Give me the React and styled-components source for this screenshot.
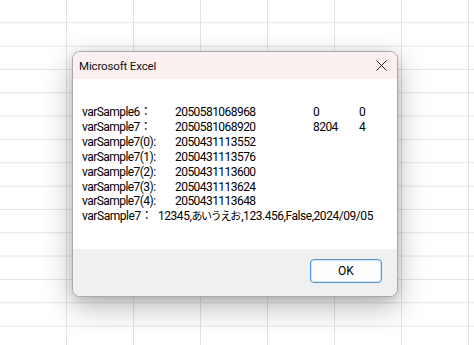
import React from "react";
import styled, { createGlobalStyle } from "styled-components";

const GlobalStyle = createGlobalStyle`
  html, body {
    margin: 0;
    padding: 0;
  }
  body {
    width: 474px;
    height: 345px;
    overflow: hidden;
    background-color: #ffffff;
    background-image:
      linear-gradient(to right, #e3e3e3 1px, transparent 1px),
      linear-gradient(to bottom, #e3e3e3 1px, transparent 1px);
    background-size: 67px 23.33px;
    background-position: -1px -1px;
    font-family: "Roboto", "Noto Sans CJK JP", sans-serif;
    color: #111111;
  }
`;

const Dialog = styled.div`
  margin: 51px 0 0 72px;
  width: 324px;
  height: 244px;
  display: flex;
  flex-direction: column;
  border: 1px solid #a9a9a9;
  border-radius: 8px;
  overflow: hidden;
  background: #ffffff;
  box-shadow: 0 10px 30px rgba(0, 0, 0, 0.28), 0 2px 8px rgba(0, 0, 0, 0.12);
`;

const TitleBar = styled.div`
  height: 27px;
  display: flex;
  align-items: center;
  justify-content: space-between;
  padding: 0 10px 0 6px;
  background: #faf0f0;
  font-size: 11.5px;
  letter-spacing: -0.15px;
`;

const CloseButton = styled.div`
  width: 12px;
  height: 12px;
  display: flex;
  align-items: center;
  justify-content: center;
  svg {
    display: block;
  }
`;

const Body = styled.div`
  flex: 1;
  padding: 26px 0 0 9px;
`;

const Table = styled.div`
  display: grid;
  grid-template-columns: 93px 138px 46px auto;
  font-size: 12px;
  letter-spacing: -0.55px;
  line-height: 14.9px;
  color: #000;
`;

const Cell = styled.div`
  white-space: nowrap;
  grid-column: ${(p) => (p.$full ? "1 / -1" : "auto")};
  letter-spacing: ${(p) => (p.$full ? "-0.45px" : "inherit")};
`;

const Kana = styled.span`
  font-size: 11px;
  letter-spacing: -1.3px;
  margin-right: 1.3px;
`;

const Footer = styled.div`
  height: 47px;
  display: flex;
  align-items: flex-start;
  justify-content: flex-end;
  padding: 10px 15px 0 0;
  box-sizing: border-box;
  background: #f0f0f0;
`;

const OkButton = styled.div`
  width: 70px;
  height: 22px;
  display: flex;
  align-items: center;
  justify-content: center;
  background: #fdfdfd;
  border: 1px solid #4f93cf;
  border-radius: 4px;
  box-shadow: inset 0 0 0 1px #d6e8f7;
  font-size: 12px;
  color: #000;
`;

const rows = [
  ["varSample6：", "2050581068968", "0", "0"],
  ["varSample7：", "2050581068920", "8204", "4"],
  ["varSample7(0):", "2050431113552"],
  ["varSample7(1):", "2050431113576"],
  ["varSample7(2):", "2050431113600"],
  ["varSample7(3):", "2050431113624"],
  ["varSample7(4):", "2050431113648"],
];

export default function App() {
  return (
    <>
      <GlobalStyle />
      <Dialog>
        <TitleBar>
          <span>Microsoft Excel</span>
          <CloseButton>
            <svg width="11" height="11" viewBox="0 0 11 11">
              <path d="M0.5 0.5 L10.5 10.5 M10.5 0.5 L0.5 10.5" stroke="#222" strokeWidth="1" fill="none" />
            </svg>
          </CloseButton>
        </TitleBar>
        <Body>
          <Table>
            {rows.map((r, i) => (
              <React.Fragment key={i}>
                <Cell>{r[0]}</Cell>
                <Cell>{r[1]}</Cell>
                <Cell>{r[2] || ""}</Cell>
                <Cell>{r[3] || ""}</Cell>
              </React.Fragment>
            ))}
            <Cell $full>
              varSample7：{"\u2002"}12345,<Kana>あいうえお</Kana>,123.456,False,2024/09/05
            </Cell>
          </Table>
        </Body>
        <Footer>
          <OkButton>OK</OkButton>
        </Footer>
      </Dialog>
    </>
  );
}
